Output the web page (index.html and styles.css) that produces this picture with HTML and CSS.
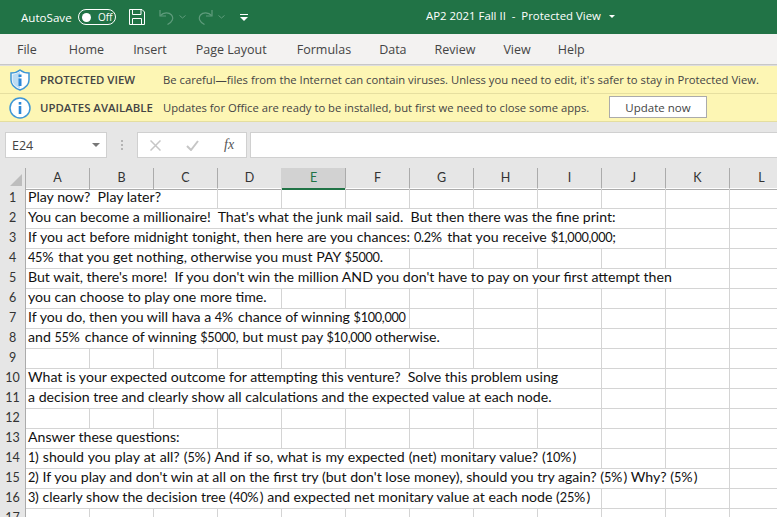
FILE: index.html
```html
<!DOCTYPE html>
<html lang="en">
<head>
<meta charset="utf-8">
<title>AP2 2021 Fall II - Protected View</title>
<link rel="stylesheet" href="styles.css">
</head>
<body>
<div class="app">
  <header class="titlebar">
    <div class="qat">
      <span class="autosave-label">AutoSave</span>
      <span class="toggle"><span class="knob"></span><span class="toggle-text">Off</span></span>
      <svg class="save-icon" width="16" height="16" viewBox="0 0 16 16" fill="none" stroke="#fff" stroke-width="1"><path d="M.5.5h12.500l2.500 2.500v12.500h-15z"/><path d="M3.500.5v5h8.500v-5"/><path d="M3.500 15.500v-6h9v6"/></svg>
      <svg class="undo-icon" width="15" height="16" viewBox="0 0 15 16" fill="none" stroke="#5f9c7c" stroke-width="1.200"><path d="M1 1v6h6"/><path d="M1.500 6.500c3-3.500 8.500-3.500 11-.5 2.500 3 1 7-4 9.500"/></svg>
      <svg class="chev" width="7" height="4" viewBox="0 0 7 4" fill="none" stroke="#5f9c7c"><path d="M.5.500l3 2.500 3-2.500"/></svg>
      <svg class="redo-icon" width="15" height="16" viewBox="0 0 15 16" fill="none" stroke="#5f9c7c" stroke-width="1.200"><path d="M14 1v6h-6"/><path d="M13.500 6.500c-3-3.500-8.500-3.500-11-.5-2.500 3-1 7 4 9.500"/></svg>
      <svg class="chev" width="7" height="4" viewBox="0 0 7 4" fill="none" stroke="#5f9c7c"><path d="M.5.500l3 2.500 3-2.500"/></svg>
      <svg class="more-icon" width="8" height="7" viewBox="0 0 8 7"><path d="M0 0h8v1h-8z" fill="#fff"/><path d="M0 3h8l-4 4z" fill="#fff"/></svg>
    </div>
    <div class="doc-title">AP2 2021 Fall II&nbsp; -&nbsp; Protected View<svg class="title-caret" width="6" height="3" viewBox="0 0 6 3"><path d="M0 0h6l-3 3z" fill="#fff"/></svg></div>
  </header>

  <nav class="tabs">
    <span class="tab tab-file">File</span>
    <span class="tab tab-home">Home</span>
    <span class="tab tab-insert">Insert</span>
    <span class="tab tab-layout">Page Layout</span>
    <span class="tab tab-formulas">Formulas</span>
    <span class="tab tab-data">Data</span>
    <span class="tab tab-review">Review</span>
    <span class="tab tab-view">View</span>
    <span class="tab">Help</span>
  </nav>

  <section class="notices">
    <div class="notice notice-first">
      <svg class="notice-icon" width="20" height="22" viewBox="0 0 20 22"><path d="M10 1c2.500 2 5.500 3 9 3v7c0 4.500-3.500 8-9 10-5.500-2-9-5.500-9-10v-7c3.500 0 6.500-1 9-3z" fill="#fff" stroke="#3d96d6" stroke-width="1.500"/><path d="M10 2.500v17c-4-1.800-7.500-4.500-7.500-8.500v-5.500c2.500-.2 5.200-1.200 7.500-3z" fill="#bcdcf2"/><rect x="8.500" y="5.500" width="3" height="2.500" fill="#2b88d8"/><rect x="8.500" y="9.500" width="3" height="7.500" fill="#2b88d8"/></svg>
      <strong class="notice-title">PROTECTED VIEW</strong>
      <span class="notice-text">Be careful—files from the Internet can contain viruses. Unless you need to edit, it's safer to stay in Protected View.</span>
    </div>
    <div class="notice notice-second">
      <svg class="notice-icon" width="22" height="22" viewBox="0 0 22 22"><circle cx="11" cy="11" r="10" fill="#fff" stroke="#3d96d6" stroke-width="1.500"/><rect x="9.700" y="5" width="2.600" height="2.600" fill="#2b88d8"/><rect x="9.700" y="9" width="2.600" height="8" fill="#2b88d8"/></svg>
      <strong class="notice-title">UPDATES AVAILABLE</strong>
      <span class="notice-text">Updates for Office are ready to be installed, but first we need to close some apps.</span>
      <button class="update-btn" type="button">Update now</button>
    </div>
  </section>

  <section class="formula-bar">
    <div class="name-box"><span>E24</span><svg width="8" height="4" viewBox="0 0 8 4"><path d="M0 0h8l-4 4z" fill="#777"/></svg></div>
    <div class="grip"><i></i><i></i><i></i></div>
    <div class="fx-buttons">
      <svg width="11" height="11" viewBox="0 0 11 11" fill="none" stroke="#c6c6c6" stroke-width="1.500"><path d="M.5.500l10 10M10.500.500l-10 10"/></svg>
      <svg width="13" height="11" viewBox="0 0 13 11" fill="none" stroke="#c6c6c6" stroke-width="2"><path d="M1 6l4 4 7-9"/></svg>
      <span class="fx">fx</span>
    </div>
    <div class="formula-input"></div>
  </section>

  <div class="sheet">
    <div class="row head">
      <div class="corner"><svg width="12" height="12" viewBox="0 0 12 12"><path d="M12 0v12h-12z" fill="#bdbdbd"/></svg></div>
      <div class="ch">A</div><div class="ch">B</div><div class="ch">C</div><div class="ch">D</div><div class="ch ch-sel">E</div><div class="ch">F</div><div class="ch">G</div><div class="ch">H</div><div class="ch">I</div><div class="ch">J</div><div class="ch">K</div><div class="ch">L</div>
    </div>
    <div class="row"><div class="rh">1</div><div class="c s3">Play now?&nbsp; Play later?</div><div class="c"></div><div class="c"></div><div class="c"></div><div class="c"></div><div class="c"></div><div class="c"></div><div class="c"></div><div class="c"></div><div class="c"></div></div>
    <div class="row"><div class="rh">2</div><div class="c s10">You can become a millionaire!&nbsp; That's what the junk mail said.&nbsp; But then there was the fine print:</div><div class="c"></div><div class="c"></div></div>
    <div class="row"><div class="rh">3</div><div class="c s10 loose-a">If you act before midnight tonight, then here are you chances: <span class="n">0.2</span><span class="p">%</span> that you receive <span class="n">$1,000,000</span>;</div><div class="c"></div><div class="c"></div></div>
    <div class="row"><div class="rh">4</div><div class="c s6"><span class="n">45</span><span class="p">%</span> that you get nothing, otherwise you must PAY <span class="n">$5000</span>.</div><div class="c"></div><div class="c"></div><div class="c"></div><div class="c"></div><div class="c"></div><div class="c"></div></div>
    <div class="row"><div class="rh">5</div><div class="c s11">But wait, there's more!&nbsp; If you don't win the million AND you don't have to pay on your first attempt then</div><div class="c"></div></div>
    <div class="row"><div class="rh">6</div><div class="c s4">you can choose to play one more time.</div><div class="c"></div><div class="c"></div><div class="c"></div><div class="c"></div><div class="c"></div><div class="c"></div><div class="c"></div><div class="c"></div></div>
    <div class="row"><div class="rh">7</div><div class="c s6">If you do, then you will hava a <span class="n">4</span><span class="p">%</span> chance of winning <span class="n">$100,000</span></div><div class="c"></div><div class="c"></div><div class="c"></div><div class="c"></div><div class="c"></div><div class="c"></div></div>
    <div class="row"><div class="rh">8</div><div class="c s7">and <span class="n">55</span><span class="p">%</span> chance of winning <span class="n">$5000</span>, but must pay <span class="n">$10,000</span> otherwise.</div><div class="c"></div><div class="c"></div><div class="c"></div><div class="c"></div><div class="c"></div></div>
    <div class="row"><div class="rh">9</div><div class="c"></div><div class="c"></div><div class="c"></div><div class="c"></div><div class="c"></div><div class="c"></div><div class="c"></div><div class="c"></div><div class="c"></div><div class="c"></div><div class="c"></div><div class="c"></div></div>
    <div class="row"><div class="rh">10</div><div class="c s9">What is your expected outcome for attempting this venture?&nbsp; Solve this problem using</div><div class="c"></div><div class="c"></div><div class="c"></div></div>
    <div class="row"><div class="rh">11</div><div class="c s9">a decision tree and clearly show all calculations and the expected value at each node.</div><div class="c"></div><div class="c"></div><div class="c"></div></div>
    <div class="row"><div class="rh">12</div><div class="c"></div><div class="c"></div><div class="c"></div><div class="c"></div><div class="c"></div><div class="c"></div><div class="c"></div><div class="c"></div><div class="c"></div><div class="c"></div><div class="c"></div><div class="c"></div></div>
    <div class="row"><div class="rh">13</div><div class="c s3">Answer these questions:</div><div class="c"></div><div class="c"></div><div class="c"></div><div class="c"></div><div class="c"></div><div class="c"></div><div class="c"></div><div class="c"></div><div class="c"></div></div>
    <div class="row"><div class="rh">14</div><div class="c s9 loose-b"><span class="n">1</span>) should you play at all? (<span class="n">5</span><span class="p">%</span>) And if so, what is my expected (net) monitary value? (<span class="n">10</span><span class="p">%</span>)</div><div class="c"></div><div class="c"></div><div class="c"></div></div>
    <div class="row"><div class="rh">15</div><div class="c s11"><span class="n">2</span>) If you play and don't win at all on the first try (but don't lose money), should you try again? (<span class="n">5</span><span class="p">%</span>) Why? (<span class="n">5</span><span class="p">%</span>)</div><div class="c"></div></div>
    <div class="row"><div class="rh">16</div><div class="c s9"><span class="n">3</span>) clearly show the decision tree (<span class="n">40</span><span class="p">%</span>) and expected net monitary value at each node (<span class="n">25</span><span class="p">%</span>)</div><div class="c"></div><div class="c"></div><div class="c"></div></div>
    <div class="row"><div class="rh">17</div><div class="c"></div><div class="c"></div><div class="c"></div><div class="c"></div><div class="c"></div><div class="c"></div><div class="c"></div><div class="c"></div><div class="c"></div><div class="c"></div><div class="c"></div><div class="c"></div></div>
  </div>
</div>
</body>
</html>
```
FILE: styles.css
```css
* { box-sizing: border-box; }
html, body { margin: 0; height: 100%; overflow: hidden; background: #fff; }
.app { width: 777px; height: 517px; overflow: hidden; font-family: "Open Sans", "Noto Sans", sans-serif; color: #444; }

.titlebar { height: 34px; background: #217346; color: #fff; display: flex; align-items: center; position: relative; }
.qat { display: flex; align-items: center; padding-left: 21px; }
.autosave-label { font-size: 11.600px; width: 57px; }
.toggle { width: 38px; height: 16px; border: 1px solid #fff; border-radius: 8px; display: flex; align-items: center; padding-left: 3px; }
.knob { width: 9px; height: 9px; border-radius: 50%; background: #fff; }
.toggle-text { font-size: 10px; margin-left: 7px; }
.save-icon { margin-left: 13px; }
.undo-icon { margin-left: 14px; }
.redo-icon { margin-left: 12px; }
.chev { margin-left: 5px; }
.more-icon { margin-left: 15px; }
.doc-title { position: absolute; left: 426px; top: 7px; font-size: 11.400px; line-height: 17px; white-space: nowrap; }
.title-caret { margin-left: 8px; vertical-align: middle; }

.tabs { height: 31px; background: #f3f2f1; display: flex; align-items: center; padding-left: 17px; font-size: 12.500px; color: #444; border-bottom: 1px solid #c8c8c8; }
.tab { white-space: nowrap; }
.tab-file { margin-right: 32px; }
.tab-home { margin-right: 29px; }
.tab-insert { margin-right: 29px; }
.tab-layout { margin-right: 30px; }
.tab-formulas { margin-right: 28px; }
.tab-data { margin-right: 28px; }
.tab-review { margin-right: 28px; }
.tab-view { margin-right: 27px; }

.notices { background: #fdf6b4; border-top: 1px solid #dedede; border-bottom: 1px solid #e4dea0; box-shadow: 0 2px 2px #dcdcdc; }
.notice { display: flex; align-items: center; padding-left: 9px; font-size: 11.250px; color: #444; white-space: nowrap; position: relative; }
.notice-first { height: 28px; border-bottom: 1px solid #e6dfa0; }
.notice-second { height: 27px; }
.notice-icon { flex: none; }
.notice-first .notice-icon { margin-left: 1px; }
.notice-title { font-weight: 600; position: absolute; left: 40px; font-size: 11.400px; }
.notice-text { position: absolute; left: 163px; }
.update-btn { position: absolute; left: 609px; top: 2px; width: 98px; height: 22px; background: #fff; border: 1px solid #ababab; font: 11.500px "Open Sans", sans-serif; color: #444; padding: 0; }

.formula-bar { height: 46px; background: #e6e6e6; display: flex; align-items: flex-start; padding-top: 10px; }
.name-box { margin-left: 5px; width: 102px; height: 26px; background: #fff; border: 1px solid #d0d0d0; display: flex; align-items: center; justify-content: space-between; padding: 0 6px; font-size: 12.500px; color: #444; }
.grip { width: 30px; height: 26px; display: flex; flex-direction: column; align-items: center; justify-content: center; gap: 2px; }
.grip i { width: 2px; height: 2px; background: #b4b4b4; }
.fx-buttons { width: 110px; height: 26px; background: #fff; border: 1px solid #d0d0d0; display: flex; align-items: center; padding-left: 12px; gap: 25px; }
.fx { font: italic 14px "Liberation Serif", serif; color: #555; }
.formula-input { flex: 1; height: 26px; background: #fff; border: 1px solid #d0d0d0; border-right: 0; margin-left: 3px; }

.sheet { background: #fff; }
.row { display: grid; grid-template-columns: 26px repeat(12, 64px); height: 20px; width: 800px; font-family: "Lato", sans-serif; }
.head { height: 20px; background: #e6e6e6; font-size: 12.500px; }
.corner { background: #e6e6e6; border-right: 1px solid #ababab; border-bottom: 1px solid #ababab; display: flex; justify-content: flex-end; align-items: flex-end; padding: 0 3px 3px 0; }
.corner svg { display: block; }
.ch { text-align: center; line-height: 20px; color: #333; border-right: 1px solid #ababab; border-bottom: 1px solid #ababab; }
.ch-sel { background: #d2d2d2; color: #217346; border-bottom: 2px solid #217346; box-shadow: -1px 0 #d2d2d2; }
.rh { background: #e6e6e6; color: #333; text-align: center; font-size: 12.500px; line-height: 20px; border-right: 1px solid #ababab; border-bottom: 1px solid #d4d4d4; }
.c { border-right: 1px solid #d4d4d4; border-bottom: 1px solid #d4d4d4; font-size: 14.140px; line-height: 18px; color: #111; white-space: nowrap; padding-left: 2px; min-width: 0; }
.n { font-size: 12.700px; letter-spacing: -.3px; }
.p { letter-spacing: 1.200px; }
.loose-a { word-spacing: .25px; }
.loose-b { word-spacing: .4px; }
.s3 { grid-column: span 3; }
.s4 { grid-column: span 4; }
.s6 { grid-column: span 6; }
.s7 { grid-column: span 7; }
.s9 { grid-column: span 9; }
.s10 { grid-column: span 10; }
.s11 { grid-column: span 11; }
```
